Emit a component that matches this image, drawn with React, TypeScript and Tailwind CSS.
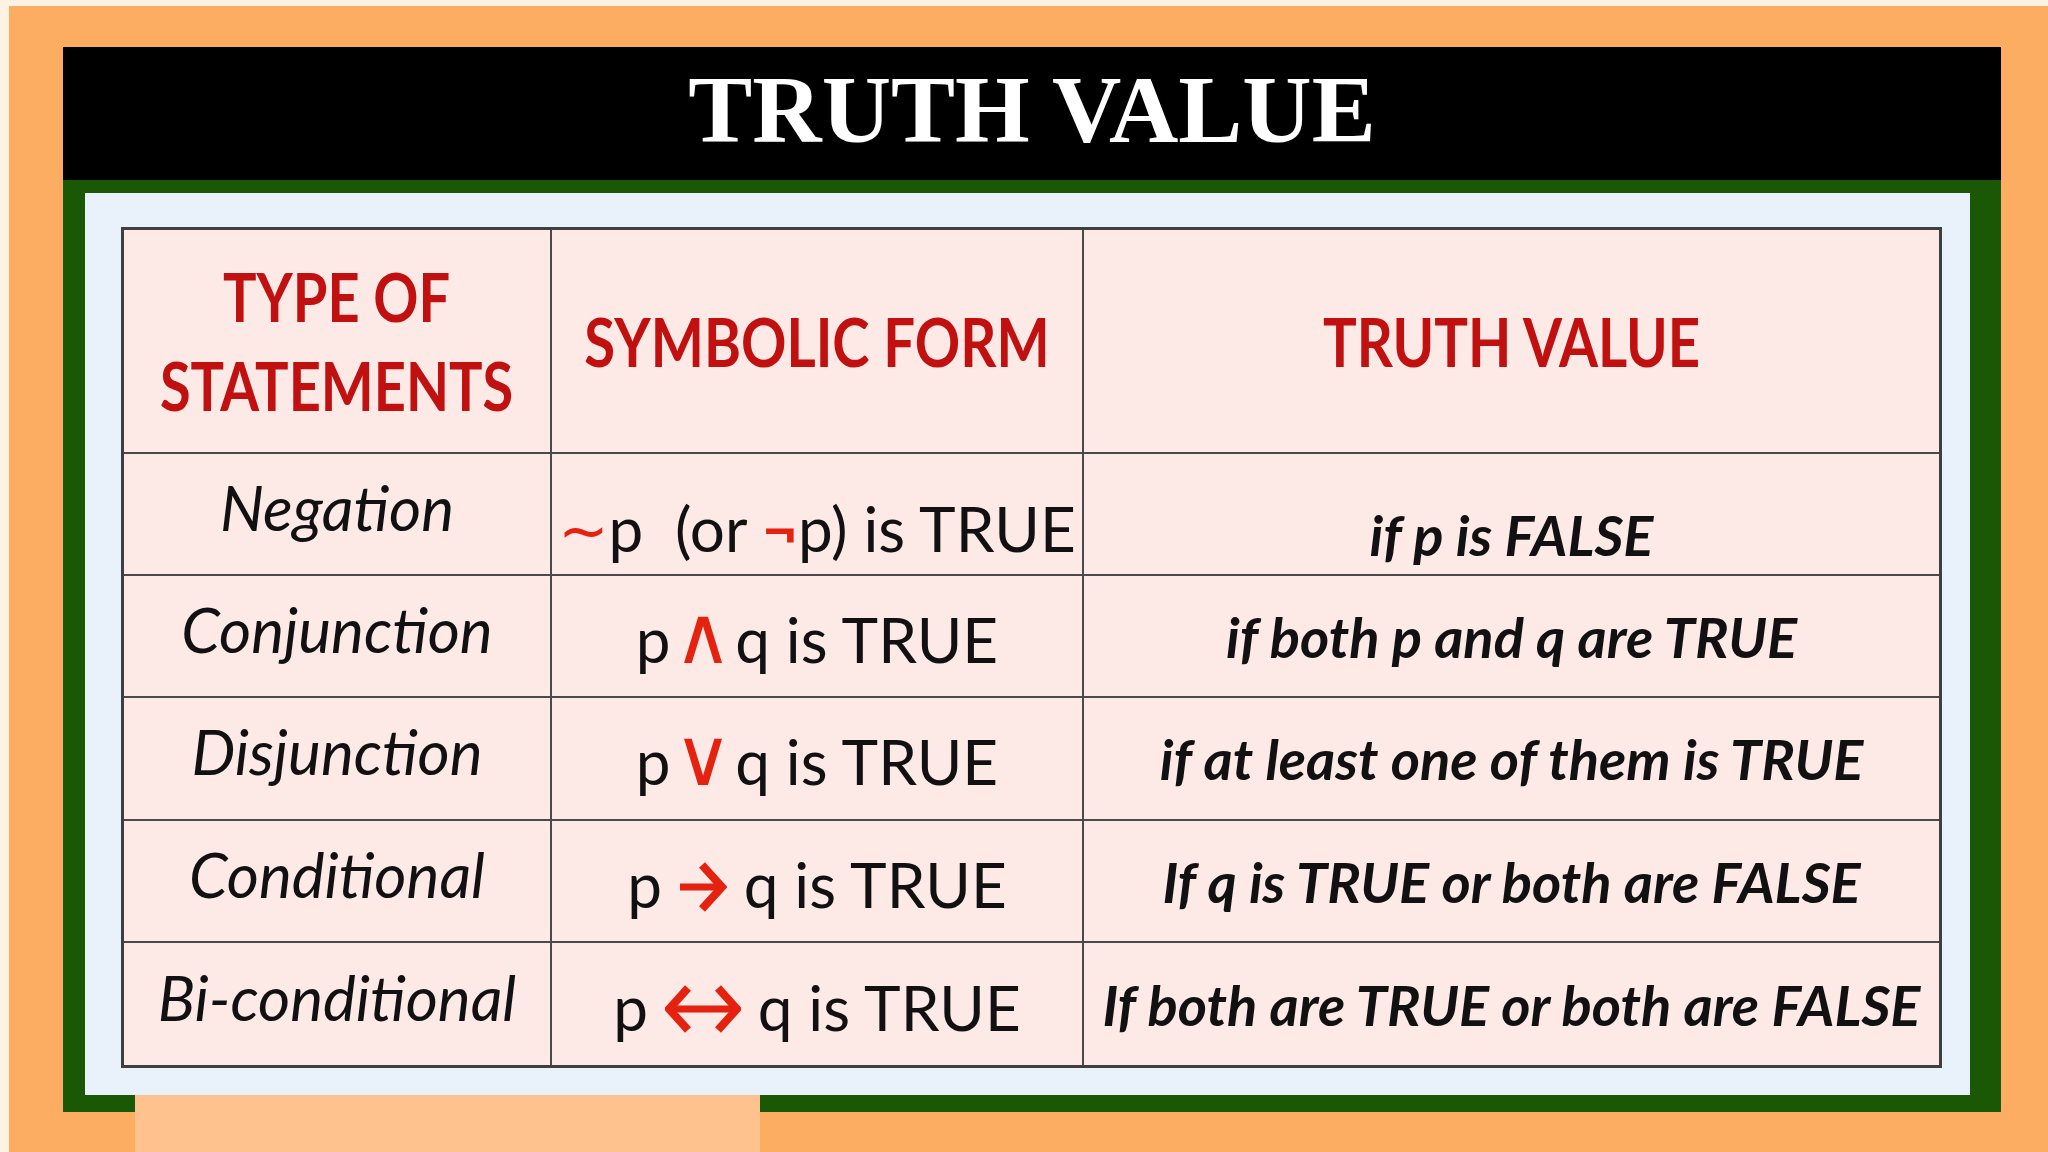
import React from "react";

const RED = "text-[#e5210f]";

function ArrowRight() {
  return (
    <svg width="48" height="52" viewBox="0 0 48 52" className="inline-block align-[-5px] mx-[1px]">
      <line x1="1" y1="26" x2="42" y2="26" stroke="#e5210f" strokeWidth="7" />
      <polyline points="23,4 43,26 23,48" fill="none" stroke="#e5210f" strokeWidth="8" strokeLinejoin="miter" />
    </svg>
  );
}

function ArrowBoth() {
  return (
    <svg width="76" height="48" viewBox="0 0 76 48" className="inline-block align-[-2px] mx-[1px]">
      <line x1="6" y1="24" x2="70" y2="24" stroke="#e5210f" strokeWidth="7" />
      <polyline points="23,3 4,24 23,45" fill="none" stroke="#e5210f" strokeWidth="8" strokeLinejoin="miter" />
      <polyline points="53,3 72,24 53,45" fill="none" stroke="#e5210f" strokeWidth="8" strokeLinejoin="miter" />
    </svg>
  );
}

const SYM = `${RED} font-['DejaVu_Sans',sans-serif] text-[80px] leading-[0] mx-[3px]`;

const rows: { type: string; sym: React.ReactNode; truth: string; c2: string; c3: string }[] = [
  {
    type: "Negation",
    sym: (
      <>
        <span className={`${RED} font-['DejaVu_Sans',sans-serif] text-[60px] leading-[0]`}>~</span>p&nbsp;&nbsp;(or{" "}
        <span className={`${RED} font-bold`}>¬</span>p) is TRUE
      </>
    ),
    truth: "if p is FALSE",
    c2: "pt-[28px]",
    c3: "pt-[42px]",
  },
  {
    type: "Conjunction",
    sym: (
      <>
        p<span className={SYM}>∧</span>q is TRUE
      </>
    ),
    truth: "if both p and q are TRUE",
    c2: "pt-[6px]",
    c3: "pt-[2px]",
  },
  {
    type: "Disjunction",
    sym: (
      <>
        p<span className={SYM}>∨</span>q is TRUE
      </>
    ),
    truth: "if at least one of them is TRUE",
    c2: "pt-[6px]",
    c3: "pt-[2px]",
  },
  {
    type: "Conditional",
    sym: (
      <>
        p <ArrowRight /> q is TRUE
      </>
    ),
    truth: "If q is TRUE or both are FALSE",
    c2: "pt-[6px]",
    c3: "pt-[2px]",
  },
  {
    type: "Bi-conditional",
    sym: (
      <>
        p <ArrowBoth /> q is TRUE
      </>
    ),
    truth: "If both are TRUE or both are FALSE",
    c2: "pt-[6px]",
    c3: "pt-[2px]",
  },
];

export default function App() {
  return (
    <div className="w-[2048px] h-[1152px] bg-[#fef3e3] pl-[9px] pt-[6px] overflow-hidden font-['Lato',sans-serif]">
      <div className="h-full bg-[#fdad62] flex flex-col pl-[54px] pr-[47px] pt-[41px]">
        <div className="h-[133px] bg-black flex items-center justify-center pb-[8px]">
          <h1 className="font-['Liberation_Serif',serif] font-bold text-white text-[96px] leading-none">
            TRUTH VALUE
          </h1>
        </div>
        <div className="bg-[#1b5806] pt-[13px] pl-[22px] pr-[31px]">
          <div className="h-[902px] bg-[#e9f2fb] pt-[34px] pl-[36px] pr-[28px] pb-[27px]">
            <div className="h-full border-[3px] border-[#3f3f3f] bg-[#fde9e6] grid grid-cols-[428px_532px_1fr] grid-rows-[224px_repeat(5,minmax(0,1fr))]">
              <div className="border-r-2 border-b-2 border-[#4a4a4a] flex items-center justify-center">
                <div className="scale-x-[0.835] text-center font-bold text-[#c0100f] text-[67px] leading-[89px] whitespace-nowrap">
                  TYPE OF
                  <br />
                  STATEMENTS
                </div>
              </div>
              <div className="border-r-2 border-b-2 border-[#4a4a4a] flex items-center justify-center">
                <span className="inline-block scale-x-[0.84] font-bold text-[#c0100f] text-[67px] leading-none whitespace-nowrap">
                  SYMBOLIC FORM
                </span>
              </div>
              <div className="border-b-2 border-[#4a4a4a] flex items-center justify-center">
                <span className="inline-block scale-x-[0.84] font-bold text-[#c0100f] text-[67px] leading-none whitespace-nowrap">
                  TRUTH VALUE
                </span>
              </div>
              {rows.map((r, i) => {
                const last = i === rows.length - 1;
                const b = last ? "" : "border-b-2";
                return (
                  <React.Fragment key={r.type}>
                    <div className={`border-r-2 ${b} border-[#4a4a4a] flex items-center justify-center pb-[14px]`}>
                      <span className="italic text-[62px] leading-none text-[#111] whitespace-nowrap">{r.type}</span>
                    </div>
                    <div className={`border-r-2 ${b} border-[#4a4a4a] flex items-center justify-center ${r.c2}`}>
                      <span className="text-[62px] leading-none text-[#111] whitespace-nowrap">{r.sym}</span>
                    </div>
                    <div className={`${b} border-[#4a4a4a] flex items-center justify-center ${r.c3}`}>
                      <span className="italic font-bold text-[56px] leading-none text-[#111] whitespace-nowrap">{r.truth}</span>
                    </div>
                  </React.Fragment>
                );
              })}
            </div>
          </div>
        </div>
        <div className="flex h-[17px]">
          <div className="w-[72px] bg-[#1b5806]" />
          <div className="w-[625px] bg-[#fdc28d]" />
          <div className="flex-1 bg-[#1b5806]" />
        </div>
        <div className="flex flex-1">
          <div className="w-[72px]" />
          <div className="w-[625px] bg-[#fdc28d]" />
        </div>
      </div>
    </div>
  );
}
